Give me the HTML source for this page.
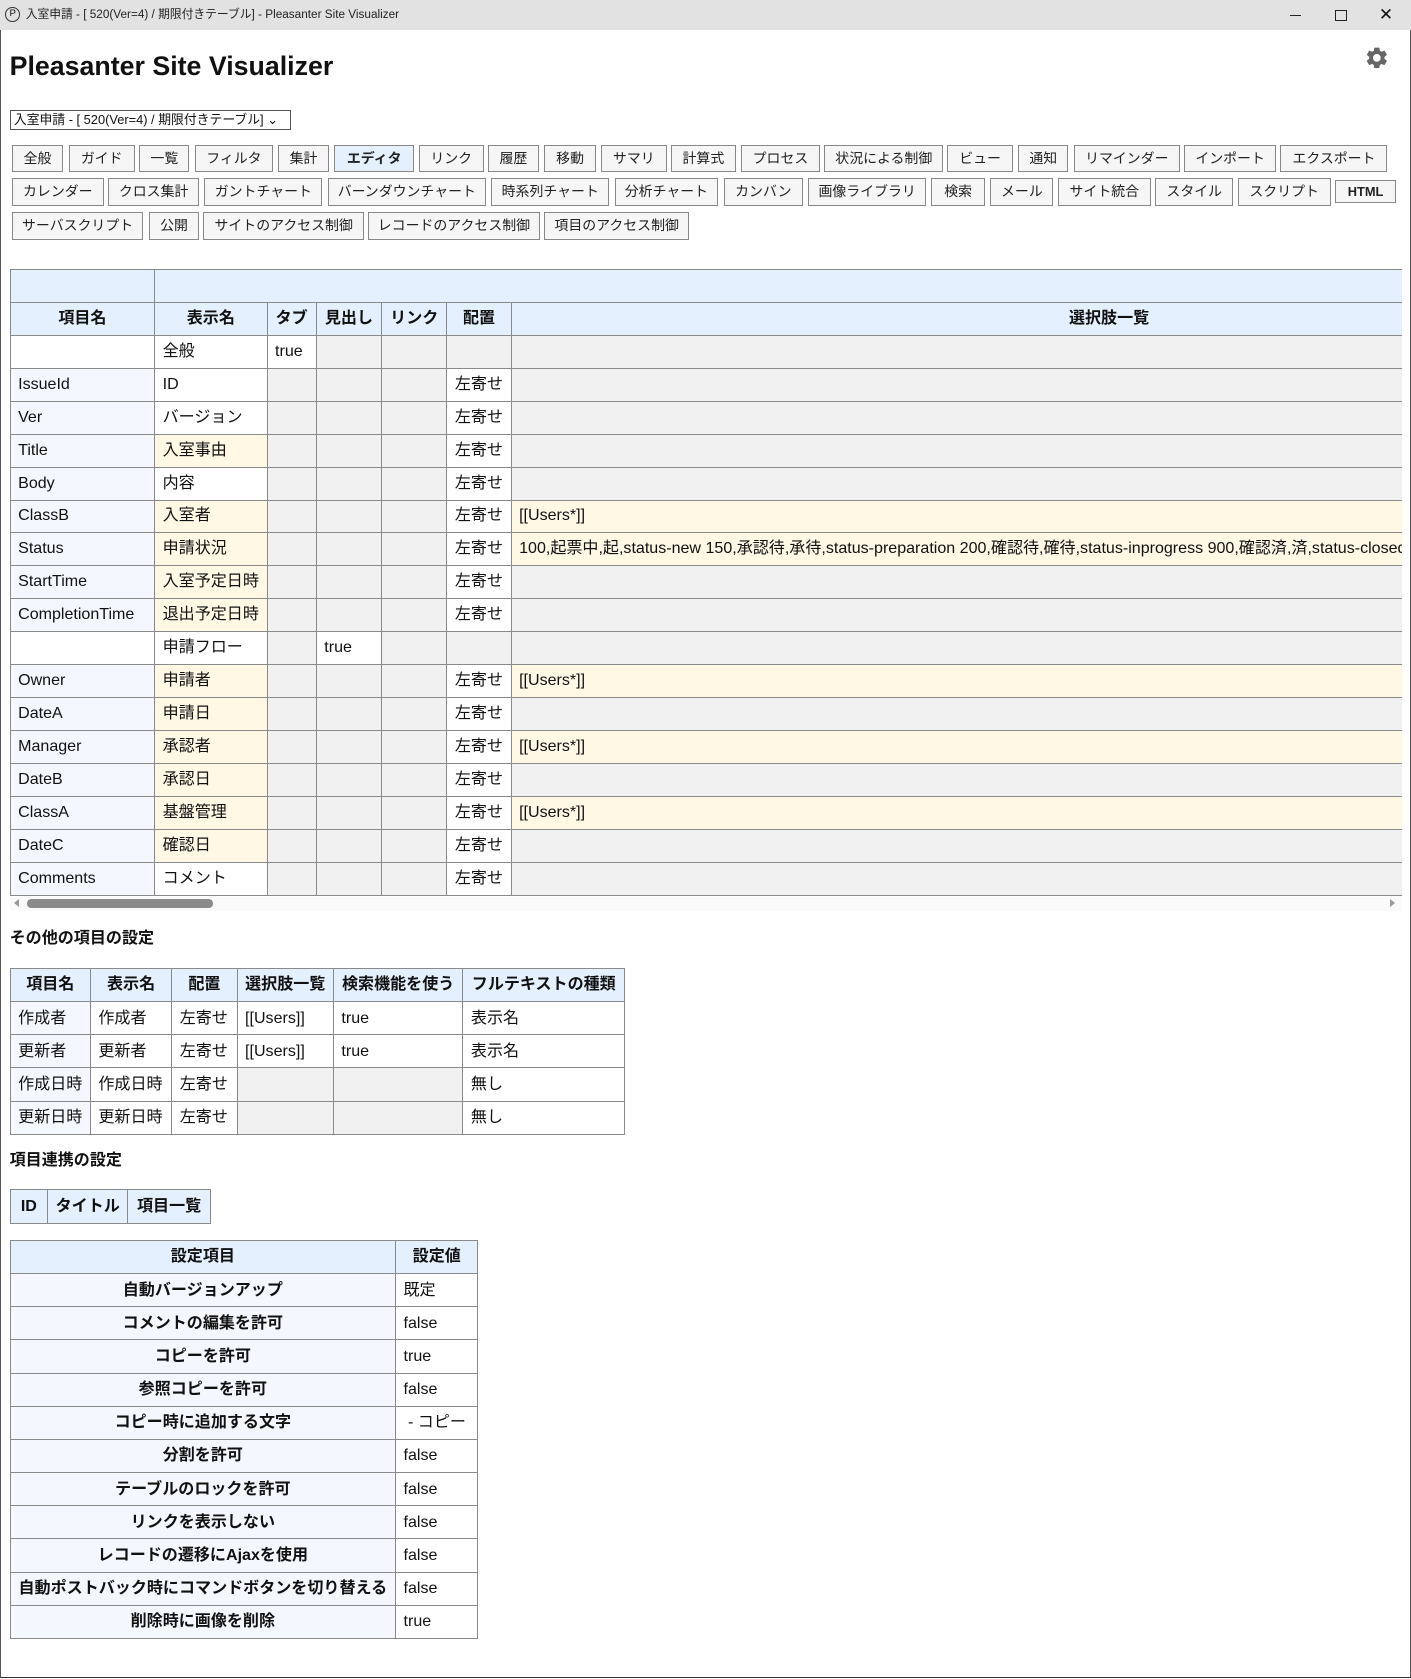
<!DOCTYPE html>
<html><head><meta charset="utf-8">
<style>
html,body{margin:0;padding:0;background:#fff;}
body{width:1318px;height:1568px;zoom:1.0706;position:relative;overflow:hidden;font-family:"Liberation Sans","Noto Sans CJK JP",sans-serif;color:#111;}
.abs{position:absolute;}
#tb{left:0;top:0;width:1318px;height:28px;background:#e2e2e2;font-size:11px;line-height:28px;}
#tb .t{position:absolute;left:24px;top:0;color:#222;}
#tb .p{position:absolute;left:5px;top:7px;width:12px;height:12px;border:1px solid #333;border-radius:50%;font-size:9px;line-height:12px;text-align:center;}
#frame{left:0;top:28px;width:1316px;height:1538px;border-left:1px solid #555;border-right:1px solid #555;border-bottom:1px solid #333;}
h1{position:absolute;left:9px;top:46px;margin:0;font-size:25px;font-weight:bold;line-height:32px;}
#sel{left:9px;top:103px;border:1px solid #555;font-size:12px;line-height:16px;padding-left:3px;box-sizing:border-box;width:263px;height:18px;}
.b{position:absolute;height:26px;box-sizing:border-box;border:1px solid #888;background:#f6f6f6;font-size:13px;line-height:24px;text-align:center;color:#222;white-space:nowrap;}
.b.on{background:#e4f0fc;font-weight:bold;}
table{border-collapse:collapse;table-layout:fixed;font-size:15px;}
td,th{border:1px solid #8a8a8a;height:31px;line-height:29px;padding:0 7px;white-space:nowrap;overflow:hidden;box-sizing:border-box;vertical-align:middle;}
#main td,#main th{height:30.8px;line-height:28px;}
th{background:#e4f0fd;font-weight:bold;text-align:center;}
.n{background:#f4f8fe;}
.w{background:#fff;}
.g{background:#f1f1f1;}
.y{background:#fef8e5;}
.sec{position:absolute;left:9px;font-size:15px;font-weight:bold;}
</style></head><body>
<div id="tb" class="abs"><div class="p">P</div><div class="t">入室申請 - [ 520(Ver=4) / 期限付きテーブル] - Pleasanter Site Visualizer</div>
<div class="abs" style="left:1205px;top:14px;width:10px;height:1px;background:#222"></div>
<div class="abs" style="left:1247px;top:9px;width:9px;height:9px;border:1px solid #222"></div>
<div class="abs" style="left:1288px;top:0;font-size:16px;line-height:28px;">✕</div>
</div>
<div id="frame" class="abs"></div>
<h1>Pleasanter Site Visualizer</h1>
<svg class="abs" style="left:1274px;top:42px" width="24" height="24" viewBox="0 0 24 24"><path fill="#666" d="M19.14 12.94c.04-.3.06-.61.06-.94s-.02-.64-.07-.94l2.03-1.58a.49.49 0 0 0 .12-.61l-1.92-3.32a.49.49 0 0 0-.59-.22l-2.39.96c-.5-.38-1.03-.7-1.62-.94l-.36-2.54A.48.48 0 0 0 13.92 2.4h-3.84a.48.48 0 0 0-.48.41l-.36 2.54c-.59.24-1.13.57-1.62.94l-2.39-.96a.48.48 0 0 0-.59.22L2.72 8.87a.47.47 0 0 0 .12.61l2.03 1.58c-.05.3-.09.63-.09.94s.02.64.07.94l-2.03 1.58a.49.49 0 0 0-.12.61l1.92 3.32c.12.22.37.29.59.22l2.39-.96c.5.38 1.03.7 1.62.94l.36 2.54c.05.24.24.41.48.41h3.84c.24 0 .44-.17.47-.41l.36-2.54c.59-.24 1.13-.56 1.62-.94l2.39.96c.22.08.47 0 .59-.22l1.92-3.32a.47.47 0 0 0-.12-.61l-2.01-1.58zM12 15.6A3.6 3.6 0 1 1 12 8.4a3.6 3.6 0 0 1 0 7.2z"/></svg>
<div id="sel" class="abs">入室申請 - [ 520(Ver=4) / 期限付きテーブル] ⌄</div>

<div class="b" style="left:11px;top:135px;width:48px">全般</div>
<div class="b" style="left:64px;top:135px;width:62px">ガイド</div>
<div class="b" style="left:130px;top:135px;width:47px">一覧</div>
<div class="b" style="left:182px;top:135px;width:73px">フィルタ</div>
<div class="b" style="left:260px;top:135px;width:47px">集計</div>
<div class="b on" style="left:312px;top:135px;width:75px">エディタ</div>
<div class="b" style="left:391px;top:135px;width:61px">リンク</div>
<div class="b" style="left:456px;top:135px;width:47px">履歴</div>
<div class="b" style="left:508px;top:135px;width:49px">移動</div>
<div class="b" style="left:561px;top:135px;width:62px">サマリ</div>
<div class="b" style="left:627px;top:135px;width:60px">計算式</div>
<div class="b" style="left:692px;top:135px;width:74px">プロセス</div>
<div class="b" style="left:770px;top:135px;width:111px">状況による制御</div>
<div class="b" style="left:885px;top:135px;width:61px">ビュー</div>
<div class="b" style="left:951px;top:135px;width:47px">通知</div>
<div class="b" style="left:1003px;top:135px;width:99px">リマインダー</div>
<div class="b" style="left:1106px;top:135px;width:86px">インポート</div>
<div class="b" style="left:1196px;top:135px;width:100px">エクスポート</div>

<div class="b" style="left:11px;top:166px;width:86px">カレンダー</div>
<div class="b" style="left:101px;top:166px;width:85px">クロス集計</div>
<div class="b" style="left:191px;top:166px;width:110px">ガントチャート</div>
<div class="b" style="left:306px;top:166px;width:148px">バーンダウンチャート</div>
<div class="b" style="left:459px;top:166px;width:110px">時系列チャート</div>
<div class="b" style="left:574px;top:166px;width:97px">分析チャート</div>
<div class="b" style="left:676px;top:166px;width:74px">カンバン</div>
<div class="b" style="left:755px;top:166px;width:110px">画像ライブラリ</div>
<div class="b" style="left:870px;top:166px;width:50px">検索</div>
<div class="b" style="left:925px;top:166px;width:59px">メール</div>
<div class="b" style="left:988px;top:166px;width:87px">サイト統合</div>
<div class="b" style="left:1079px;top:166px;width:73px">スタイル</div>
<div class="b" style="left:1156px;top:166px;width:87px">スクリプト</div>
<div class="b" style="left:1247px;top:168px;width:57px;height:22px;line-height:20px;font-weight:bold;font-size:12px">HTML</div>

<div class="b" style="left:11px;top:198px;width:123px">サーバスクリプト</div>
<div class="b" style="left:139px;top:198px;width:47px">公開</div>
<div class="b" style="left:190px;top:198px;width:150px">サイトのアクセス制御</div>
<div class="b" style="left:344px;top:198px;width:160px">レコードのアクセス制御</div>
<div class="b" style="left:508px;top:198px;width:136px">項目のアクセス制御</div>

<div class="abs" style="left:9px;top:251px;width:1301px;height:587px;overflow:hidden;">
<table id="main" style="width:1585px">
<colgroup><col style="width:135px"><col style="width:105px"><col style="width:46px"><col style="width:61px"><col style="width:61px"><col style="width:60px"><col style="width:1117px"></colgroup>
<tr><th></th><th colspan="6"></th></tr>
<tr><th>項目名</th><th>表示名</th><th style="padding:0">タブ</th><th style="padding:0">見出し</th><th style="padding:0">リンク</th><th>配置</th><th>選択肢一覧</th></tr>
<tr><td class="w"></td><td class="w">全般</td><td class="w">true</td><td class="g"></td><td class="g"></td><td class="g"></td><td class="g"></td></tr>
<tr><td class="n">IssueId</td><td class="w">ID</td><td class="g"></td><td class="g"></td><td class="g"></td><td class="w">左寄せ</td><td class="g"></td></tr>
<tr><td class="n">Ver</td><td class="w">バージョン</td><td class="g"></td><td class="g"></td><td class="g"></td><td class="w">左寄せ</td><td class="g"></td></tr>
<tr><td class="n">Title</td><td class="y">入室事由</td><td class="g"></td><td class="g"></td><td class="g"></td><td class="w">左寄せ</td><td class="g"></td></tr>
<tr><td class="n">Body</td><td class="w">内容</td><td class="g"></td><td class="g"></td><td class="g"></td><td class="w">左寄せ</td><td class="g"></td></tr>
<tr><td class="n">ClassB</td><td class="y">入室者</td><td class="g"></td><td class="g"></td><td class="g"></td><td class="w">左寄せ</td><td class="y">[[Users*]]</td></tr>
<tr><td class="n">Status</td><td class="y">申請状況</td><td class="g"></td><td class="g"></td><td class="g"></td><td class="w">左寄せ</td><td class="y">100,起票中,起,status-new 150,承認待,承待,status-preparation 200,確認待,確待,status-inprogress 900,確認済,済,status-closed</td></tr>
<tr><td class="n">StartTime</td><td class="y">入室予定日時</td><td class="g"></td><td class="g"></td><td class="g"></td><td class="w">左寄せ</td><td class="g"></td></tr>
<tr><td class="n">CompletionTime</td><td class="y">退出予定日時</td><td class="g"></td><td class="g"></td><td class="g"></td><td class="w">左寄せ</td><td class="g"></td></tr>
<tr><td class="w"></td><td class="w">申請フロー</td><td class="g"></td><td class="w">true</td><td class="g"></td><td class="g"></td><td class="g"></td></tr>
<tr><td class="n">Owner</td><td class="y">申請者</td><td class="g"></td><td class="g"></td><td class="g"></td><td class="w">左寄せ</td><td class="y">[[Users*]]</td></tr>
<tr><td class="n">DateA</td><td class="y">申請日</td><td class="g"></td><td class="g"></td><td class="g"></td><td class="w">左寄せ</td><td class="g"></td></tr>
<tr><td class="n">Manager</td><td class="y">承認者</td><td class="g"></td><td class="g"></td><td class="g"></td><td class="w">左寄せ</td><td class="y">[[Users*]]</td></tr>
<tr><td class="n">DateB</td><td class="y">承認日</td><td class="g"></td><td class="g"></td><td class="g"></td><td class="w">左寄せ</td><td class="g"></td></tr>
<tr><td class="n">ClassA</td><td class="y">基盤管理</td><td class="g"></td><td class="g"></td><td class="g"></td><td class="w">左寄せ</td><td class="y">[[Users*]]</td></tr>
<tr><td class="n">DateC</td><td class="y">確認日</td><td class="g"></td><td class="g"></td><td class="g"></td><td class="w">左寄せ</td><td class="g"></td></tr>
<tr><td class="n">Comments</td><td class="w">コメント</td><td class="g"></td><td class="g"></td><td class="g"></td><td class="w">左寄せ</td><td class="g"></td></tr>
</table></div>
<div class="abs" style="left:9px;top:838px;width:1301px;height:13px;background:#fafafa;"></div>
<div class="abs" style="left:25px;top:840px;width:174px;height:8px;border-radius:4px;background:#8a8a8a;"></div>
<div class="abs" style="left:13px;top:840px;width:0;height:0;border-top:4px solid transparent;border-bottom:4px solid transparent;border-right:5px solid #999;"></div>
<div class="abs" style="left:1298px;top:840px;width:0;height:0;border-top:4px solid transparent;border-bottom:4px solid transparent;border-left:5px solid #999;"></div>

<div class="sec" style="top:863px">その他の項目の設定</div>
<table class="abs" style="left:9px;top:904px;width:574px">
<colgroup><col style="width:75px"><col style="width:76px"><col style="width:61px"><col style="width:90px"><col style="width:121px"><col style="width:151px"></colgroup>
<tr><th style="padding:0">項目名</th><th style="padding:0">表示名</th><th style="padding:0">配置</th><th style="padding:0">選択肢一覧</th><th style="padding:0">検索機能を使う</th><th style="padding:0">フルテキストの種類</th></tr>
<tr><td class="n">作成者</td><td class="w">作成者</td><td class="w">左寄せ</td><td class="w">[[Users]]</td><td class="w">true</td><td class="w">表示名</td></tr>
<tr><td class="n">更新者</td><td class="w">更新者</td><td class="w">左寄せ</td><td class="w">[[Users]]</td><td class="w">true</td><td class="w">表示名</td></tr>
<tr><td class="n">作成日時</td><td class="w">作成日時</td><td class="w">左寄せ</td><td class="g"></td><td class="g"></td><td class="w">無し</td></tr>
<tr><td class="n">更新日時</td><td class="w">更新日時</td><td class="w">左寄せ</td><td class="g"></td><td class="g"></td><td class="w">無し</td></tr>
</table>

<div class="sec" style="top:1070px">項目連携の設定</div>
<table class="abs" style="left:9px;top:1111px;width:187px">
<colgroup><col style="width:35px"><col style="width:75px"><col style="width:77px"></colgroup>
<tr><th style="padding:0">ID</th><th style="padding:0">タイトル</th><th style="padding:0">項目一覧</th></tr>
</table>

<table class="abs" style="left:9px;top:1158px;width:437px">
<colgroup><col style="width:360px"><col style="width:77px"></colgroup>
<tr><th>設定項目</th><th>設定値</th></tr>
<tr><th style="background:#f4f8fe">自動バージョンアップ</th><td class="w">既定</td></tr>
<tr><th style="background:#f4f8fe">コメントの編集を許可</th><td class="w">false</td></tr>
<tr><th style="background:#f4f8fe">コピーを許可</th><td class="w">true</td></tr>
<tr><th style="background:#f4f8fe">参照コピーを許可</th><td class="w">false</td></tr>
<tr><th style="background:#f4f8fe">コピー時に追加する文字</th><td class="w">&nbsp;- コピー</td></tr>
<tr><th style="background:#f4f8fe">分割を許可</th><td class="w">false</td></tr>
<tr><th style="background:#f4f8fe">テーブルのロックを許可</th><td class="w">false</td></tr>
<tr><th style="background:#f4f8fe">リンクを表示しない</th><td class="w">false</td></tr>
<tr><th style="background:#f4f8fe">レコードの遷移にAjaxを使用</th><td class="w">false</td></tr>
<tr><th style="background:#f4f8fe">自動ポストバック時にコマンドボタンを切り替える</th><td class="w">false</td></tr>
<tr><th style="background:#f4f8fe">削除時に画像を削除</th><td class="w">true</td></tr>
</table>
</body></html>
